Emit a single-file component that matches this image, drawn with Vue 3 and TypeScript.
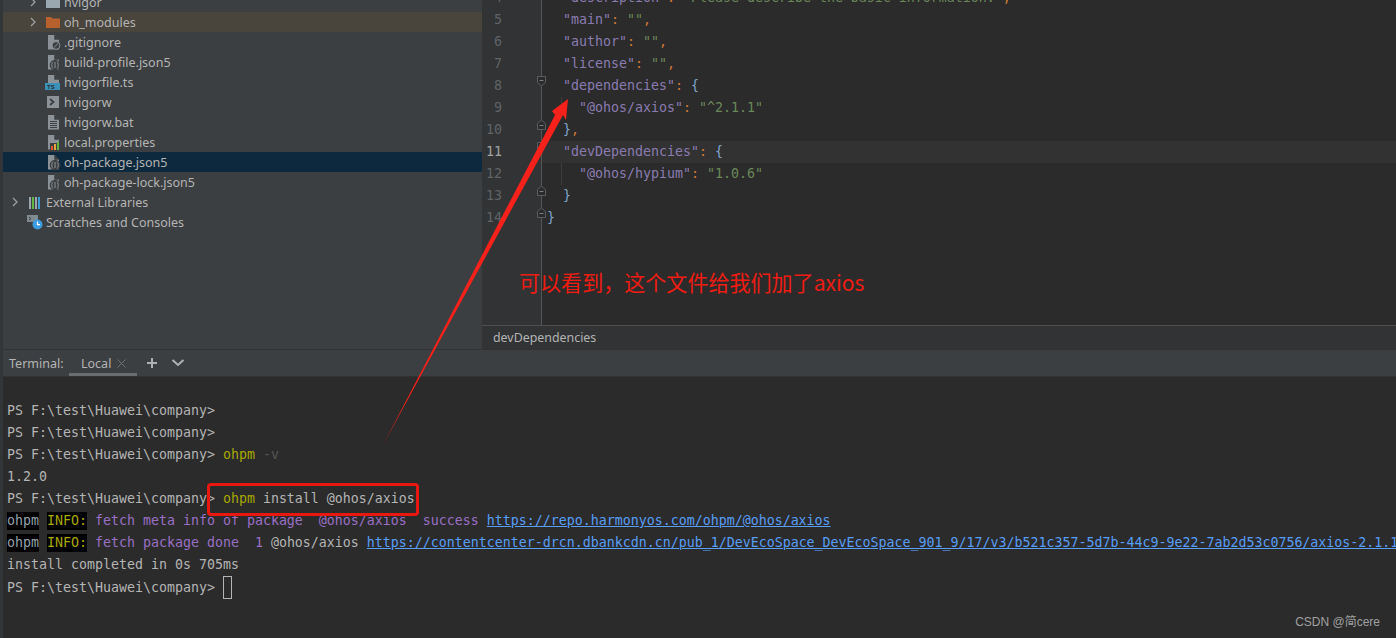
<script setup lang="ts">
interface TreeRow { name: string; depth: number; icon: string; arrow?: boolean; cls?: string }
const rows: TreeRow[] = [
  { name: 'hvigor', depth: 1, icon: 'folder', arrow: true },
  { name: 'oh_modules', depth: 1, icon: 'folder-o', arrow: true, cls: 'hl' },
  { name: '.gitignore', depth: 1, icon: 'ignore' },
  { name: 'build-profile.json5', depth: 1, icon: 'json' },
  { name: 'hvigorfile.ts', depth: 1, icon: 'ts' },
  { name: 'hvigorw', depth: 1, icon: 'shell' },
  { name: 'hvigorw.bat', depth: 1, icon: 'text' },
  { name: 'local.properties', depth: 1, icon: 'props' },
  { name: 'oh-package.json5', depth: 1, icon: 'json', cls: 'sel' },
  { name: 'oh-package-lock.json5', depth: 1, icon: 'json' },
  { name: 'External Libraries', depth: 0, icon: 'libs', arrow: true },
  { name: 'Scratches and Consoles', depth: 0, icon: 'scratch' },
]
const lineNos = [4, 5, 6, 7, 8, 9, 10, 11, 12, 13, 14]
const foldOpen = [8, 11]
const foldClose = [10, 13, 14]
const link = 'https://contentcenter-drcn.dbankcdn.cn/pub_1/DevEcoSpace_DevEcoSpace_901_9/17/v3/b521c357-5d7b-44c9-9e22-7ab2d53c0756/axios-2.1.1.tgz'
const prompt = 'PS F:\\test\\Huawei\\company>'
const doneText = 'fetch package done  1'
</script>

<template>
  <div class="app">
    <div class="top">
      <aside class="tree">
        <div v-for="r in rows" :key="r.name" class="row" :class="[r.cls, 'd' + r.depth]">
          <svg v-if="r.arrow" class="arrow" width="8" height="10" viewBox="0 0 8 10"><path d="M2 1l4 4-4 4" fill="none" stroke="#9da0a2" stroke-width="1.3"/></svg>
          <span v-else class="arrow-gap"></span>
          <svg class="icon" width="16" height="16" viewBox="0 0 16 16">
            <template v-if="r.icon === 'folder'"><path d="M1 3h5l1.500 1.500H15V14H1z" fill="#9aa7b0"/></template>
            <template v-else-if="r.icon === 'folder-o'"><path d="M1 3h5l1.500 1.500H15V14H1z" fill="#b9602f"/></template>
            <template v-else-if="r.icon === 'libs'">
              <path d="M2 3h2v12H2z" fill="#9aa7b0"/><path d="M5 3h2v12H5z" fill="#62b543"/><path d="M8 3h2v12H8z" fill="#9aa7b0"/><path d="M11 3h2v12h-2z" fill="#3a9bd5"/>
            </template>
            <template v-else-if="r.icon === 'scratch'">
              <path d="M0 1h11v7H0z" fill="#7f8b91"/><path d="M2 3l2 1.500-2 1.500" fill="none" stroke="#3c3f41"/>
              <circle cx="10.500" cy="10.500" r="5" fill="#3d9ce0"/><path d="M10.500 7.500v3.200h2.500" fill="none" stroke="#fff" stroke-width="1.200"/>
            </template>
            <template v-else-if="r.icon === 'shell'">
              <path d="M2 2h12v12H2z" fill="#8b9399"/><path d="M5 5l3.500 3L5 11" fill="none" stroke="#3c3f41" stroke-width="1.800"/>
            </template>
            <template v-else>
              <path d="M3 1h6.500L14 5.500V15.500H3z" fill="#8b9399"/><path d="M9.500 1v4.500H14" fill="#3c3f41"/><path d="M9.500 1L14 5.500H9.500z" fill="#3c3f41"/>
              <template v-if="r.icon === 'text'"><path d="M5 7.500h7M5 9.500h7M5 11.500h7M5 13.500h7" stroke="#3c3f41" stroke-width="1"/></template>
              <template v-if="r.icon === 'ignore'"><circle cx="11" cy="11.500" r="3.900" fill="#3c3f41" stroke="#8b9399"/><path d="M9 13.500l4-4" stroke="#8b9399"/></template>
              <template v-if="r.icon === 'json'"><circle cx="10" cy="11" r="5.300" fill="#3c3f41"/><path d="M8 7.500c-1.500 1-.5 2.500-1.500 3.500 1 1 0 2.500 1.500 3.500M12 7.500c1.500 1 .5 2.500 1.500 3.500-1 1 0 2.500-1.500 3.500M10 8v6" fill="none" stroke="#8b9399" stroke-width="1"/></template>
              <template v-if="r.icon === 'props'"><path d="M5 9h10v7H5z" fill="#3c3f41"/><path d="M6 12h2v4H6z" fill="#e05a2b"/><path d="M9 10h2v6H9z" fill="#e8a33d"/><path d="M12 8h2v8h-2z" fill="#62b543"/></template>
              <template v-if="r.icon === 'ts'"><path d="M0 9h15v7H0z" fill="#3b91b8"/><text x="2" y="15" class="tsx">TS</text></template>
            </template>
          </svg>
          <span class="label">{{ r.name }}</span>
        </div>
      </aside>

      <section class="editor">
        <div class="code-area">
          <div class="gutter">
            <div v-for="n in lineNos" :key="n" class="ln" :class="{ cur: n === 11 }">
              {{ n }}
              <svg v-if="foldOpen.includes(n)" class="fold" width="11" height="12" viewBox="0 0 11 12"><path d="M1.500 1.500h8v6l-4 3.500-4-3.500z" fill="#2b2b2b" stroke="#5a5d5f"/><path d="M3.500 5.500h4" stroke="#7a7d7f"/></svg>
              <svg v-if="foldClose.includes(n)" class="fold" width="11" height="12" viewBox="0 0 11 12"><path d="M1.500 10.500h8v-6L5.500 1l-4 3.500z" fill="#2b2b2b" stroke="#5a5d5f"/><path d="M3.500 6.500h4" stroke="#7a7d7f"/></svg>
            </div>
          </div>
          <div class="code">
            <div class="cl"><span class="ind2"></span><span class="k">"description"</span><span class="p">: </span><span class="s">"Please describe the basic information."</span><span class="p">,</span></div>
            <div class="cl"><span class="ind2"></span><span class="k">"main"</span><span class="p">: </span><span class="s">""</span><span class="p">,</span></div>
            <div class="cl"><span class="ind2"></span><span class="k">"author"</span><span class="p">: </span><span class="s">""</span><span class="p">,</span></div>
            <div class="cl"><span class="ind2"></span><span class="k">"license"</span><span class="p">: </span><span class="s">""</span><span class="p">,</span></div>
            <div class="cl"><span class="ind2"></span><span class="k">"dependencies"</span><span class="p">: </span><span class="b">{</span></div>
            <div class="cl guide"><span class="ind4"></span><span class="k">"@ohos/axios"</span><span class="p">: </span><span class="s">"^2.1.1"</span></div>
            <div class="cl"><span class="ind2"></span><span class="b">}</span><span class="p">,</span></div>
            <div class="cl cur"><span class="ind2"></span><span class="k">"devDependencies"</span><span class="p">: </span><span class="b">{</span></div>
            <div class="cl guide"><span class="ind4"></span><span class="k">"@ohos/hypium"</span><span class="p">: </span><span class="s">"1.0.6"</span></div>
            <div class="cl"><span class="ind2"></span><span class="b">}</span></div>
            <div class="cl"><span class="b">}</span></div>
          </div>
        </div>
        <div class="crumb">devDependencies</div>
      </section>
    </div>

    <div class="term-head">
      <span class="term-title">Terminal:</span>
      <div class="tab">
        <span>Local</span>
        <svg width="9" height="9" viewBox="0 0 9 9"><path d="M.5.500l8 8M8.500.500l-8 8" stroke="#6e7173" stroke-width="1"/></svg>
      </div>
      <svg class="head-ic" width="12" height="12" viewBox="0 0 12 12"><path d="M6 1v10M1 6h10" stroke="#afb1b3" stroke-width="2"/></svg>
      <svg class="head-ic2" width="14" height="8" viewBox="0 0 14 8"><path d="M1.500 1l5.500 5 5.500-5" fill="none" stroke="#afb1b3" stroke-width="2"/></svg>
    </div>

    <div class="term">
      <div class="tl"></div>
      <div class="tl">{{ prompt }}</div>
      <div class="tl">{{ prompt }}</div>
      <div class="tl">{{ prompt }} <span class="y">ohpm</span> <span class="dim">-v</span></div>
      <div class="tl">1.2.0</div>
      <div class="tl">{{ prompt }} <span class="y">ohpm</span> install @ohos/axios</div>
      <div class="tl"><span class="blk">ohpm</span> <span class="blk y">INFO:</span> <span class="pu">fetch meta info of package `@ohos/axios` success</span> <a class="lnk">https://repo.harmonyos.com/ohpm/@ohos/axios</a></div>
      <div class="tl"><span class="blk">ohpm</span> <span class="blk y">INFO:</span> <span class="pu">{{ doneText }}</span> @ohos/axios <a class="lnk">{{ link }}</a></div>
      <div class="tl">install completed in 0s 705ms</div>
      <div class="tl">{{ prompt }} <span class="cursor"></span></div>
    </div>

    <svg class="overlay" width="1396" height="638" viewBox="0 0 1396 638">
      <path d="M383 445L555 115L552 111L568 99L566 120L563 115z" fill="#f5211a"/>
    </svg>
    <div class="redbox"></div>
    <div class="note">可以看到，这个文件给我们加了axios</div>
    <div class="wm">CSDN @简cere</div>
  </div>
</template>

<style>
html, body { margin: 0; background: #2b2b2b; overflow: hidden; }
</style>

<style scoped>
.app { position: relative; width: 1396px; height: 638px; overflow: hidden; display: flex; flex-direction: column; background: #2b2b2b; border-left: 3px solid #333638; box-sizing: border-box; }
.top { display: flex; height: 350px; flex: none; overflow: hidden; border-bottom: 1px solid #323232; box-sizing: border-box; }
.tree { width: 479px; flex: none; background: #3c3f41; margin-top: -8px; font: 12.5px "Noto Sans", sans-serif; color: #b4b4b4; box-sizing: border-box; height: 360px; }
.row { height: 20px; display: flex; align-items: center; white-space: nowrap; }
.row.d1 { padding-left: 26px; }
.row.d0 { padding-left: 8px; }
.row.hl { background: #4a453c; }
.row.sel { background: #0d293e; }
.arrow { width: 8px; flex: none; }
.arrow-gap { width: 8px; flex: none; }
.icon { margin-left: 8px; margin-right: 3px; flex: none; overflow: visible; }
.row.d0 .icon { margin-left: 8px; margin-right: 3px; }
.tsx { font: bold 6px "Liberation Sans", sans-serif; fill: #2b2b2b; }

.editor { flex: 1; display: flex; flex-direction: column; min-width: 0; background: #2b2b2b; }
.code-area { flex: 1; display: flex; min-height: 0; overflow: hidden; }
.gutter { width: 60px; flex: none; background: #313335; border-right: 1px solid #555555; box-sizing: border-box; margin-top: -13px; }
.ln { position: relative; height: 22px; font: 13.29px/22px "DejaVu Sans Mono", monospace; color: #606366; padding-right: 39px; text-align: right; }
.ln.cur { color: #a4a3a3; }
.fold { position: absolute; left: 54px; top: 0; }
.code { flex: 1; margin-top: -13px; font: 13.29px/22px "DejaVu Sans Mono", monospace; white-space: pre; }
.cl { height: 22px; padding-left: 5px; position: relative; }
.cl.cur { background: #323232; }
.cl.guide::before { content: ""; position: absolute; left: 19px; top: 0; bottom: 0; width: 1px; background: #3d3d3d; }
.ind2 { display: inline-block; width: 16px; }
.ind4 { display: inline-block; width: 32px; }
.k { color: #8a7bb0; }
.s { color: #6a8759; }
.p { color: #cc7832; }
.b { color: #7fa6cc; }
.crumb { height: 23px; flex: none; background: #313335; border-top: 1px solid #4d4f51; font: 12.4px/24px "Noto Sans", sans-serif; color: #b4b4b4; padding-left: 11px; }

.term-head { height: 26px; flex: none; display: flex; align-items: center; background: #3c3f41; font: 12.5px "Noto Sans", sans-serif; color: #b4b4b4; position: relative; border-bottom: 1px solid #323232; }
.term-title { margin-left: 6px; width: 60px; }
.tab { width: 68px; height: 26px; display: flex; align-items: center; box-sizing: border-box; padding-left: 12px; padding-top: 3px; gap: 6px; border-bottom: 3px solid #6a6d70; }
.head-ic { margin-left: 9px; }
.head-ic2 { margin-left: 13px; }

.term { flex: 1; padding-top: 1px; font: 13.29px/22px "DejaVu Sans Mono", monospace; color: #b4b4b4; padding-left: 4px; white-space: pre; overflow: hidden; background: #2b2b2b; }
.tl { height: 22px; }
.y { color: #a8a800; }
.dim { color: #555555; }
.blk { background: #000; color: #93a0ab; display: inline-block; line-height: 18px; height: 18px; }
.blk.y { color: #a8a800; }
.pu { color: #9a6fc4; }
.lnk { color: #589df6; text-decoration: underline; }
.cursor { display: inline-block; width: 9px; height: 23px; border: 1px solid #b4b4b4; box-sizing: border-box; vertical-align: middle; }

.overlay { position: absolute; left: -3px; top: 0; pointer-events: none; }
.redbox { position: absolute; left: 204px; top: 483px; width: 212px; height: 33px; box-sizing: border-box; border: 3px solid #e8170f; border-radius: 4px; }
.note { position: absolute; left: 516px; top: 267px; font: 21.05px/30px "Noto Sans CJK SC", "Noto Sans", sans-serif; color: #ee1c12; white-space: nowrap; }
.wm { position: absolute; right: 16px; top: 613px; font: 12px/18px "Liberation Sans", "Noto Sans CJK SC", sans-serif; color: #a0a0a0; white-space: nowrap; }
</style>
